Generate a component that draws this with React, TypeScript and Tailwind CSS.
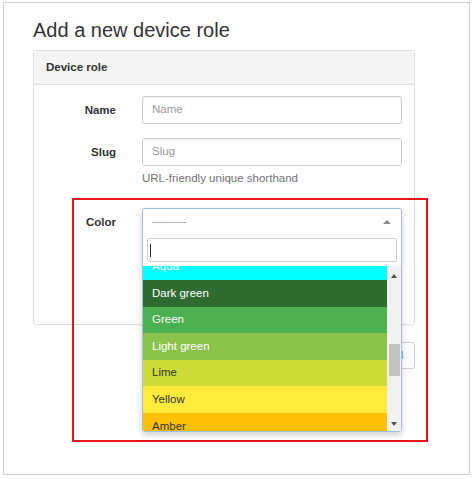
import React from "react";

const options = [
	{ name: "Aqua", bg: "bg-[#00ffff]", text: "text-white" },
	{ name: "Dark green", bg: "bg-[#2f6b31]", text: "text-white" },
	{ name: "Green", bg: "bg-[#4caf50]", text: "text-white" },
	{ name: "Light green", bg: "bg-[#8bc34a]", text: "text-white" },
	{ name: "Lime", bg: "bg-[#cddc39]", text: "text-[#333]" },
	{ name: "Yellow", bg: "bg-[#ffeb3b]", text: "text-[#333]" },
	{ name: "Amber", bg: "bg-[#ffc107]", text: "text-[#333]" },
];

const FormRow = ({ label, children }: { label: string; children: React.ReactNode }) => {
	return (
		<div className="flex items-start">
			<label className="w-[82px] shrink-0 pt-[6px] text-right text-[11.5px] font-bold leading-[16px] text-[#333]">
				{label}
			</label>
			<div className="ml-[26px] w-[260px]">{children}</div>
		</div>
	);
};

const TextInput = ({ placeholder }: { placeholder: string }) => {
	return (
		<div className="flex h-[28px] items-center rounded-[3px] border border-[#ccc] bg-white px-[9px] text-[11.5px] text-[#999] shadow-[inset_0_1px_1px_rgba(0,0,0,0.06)]">
			{placeholder}
		</div>
	);
};

const ColorSelect = () => {
	return (
		<div className="relative h-[28px]">
			{/* open select2 dropdown, lies over the rest of the form */}
			<div className="absolute left-0 top-0 z-10 w-[260px] rounded-[3px] border border-[#9dc1e4] bg-white shadow-[0_3px_6px_rgba(0,0,0,0.18)]">
				<div className="flex h-[25px] items-center justify-between pl-[9px] pr-[10px]">
					<span className="text-[11.5px] text-[#999]">---------</span>
					<span className="h-0 w-0 border-x-[4px] border-b-[4px] border-x-transparent border-b-[#888]" />
				</div>
				<div className="p-[4px]">
					<div className="flex h-[24px] items-center rounded-[2px] border border-[#ccc] px-[2px]">
						<span className="h-[13px] w-px bg-[#222]" />
					</div>
				</div>
				<div className="flex h-[165px] overflow-hidden">
					<div className="flex-1 overflow-hidden">
						<div className="-mt-[12.6px]">
							{options.map((o) => (
								<div
									key={o.name}
									className={`flex h-[26.6px] items-center pl-[9px] text-[11.5px] ${o.bg} ${o.text}`}
								>
									{o.name}
								</div>
							))}
						</div>
					</div>
					<div className="flex w-[14px] flex-col items-center bg-[#f1f1f1]">
						<span className="mt-[8px] h-0 w-0 border-x-[3px] border-b-[4px] border-x-transparent border-b-[#505050]" />
						<div className="mt-[66px] h-[32px] w-[11px] bg-[#c1c1c1]" />
						<div className="flex-1" />
						<span className="mb-[5px] h-0 w-0 border-x-[3px] border-t-[4px] border-x-transparent border-t-[#505050]" />
					</div>
				</div>
			</div>
		</div>
	);
};

export default function App() {
	return (
		<div className="h-[479px] w-[474px] bg-white pl-[3px] pt-[2px] font-['Liberation_Sans',Arial,sans-serif]">
			<div className="relative h-[473px] w-[467px] border border-[#cdcdcd] pl-[29px] pt-[16px]">
				<h1 className="text-[20px] font-normal leading-[22px] text-[#333]">Add a new device role</h1>

				<div className="mt-[9px] w-[382px] rounded-[3px] border border-[#ddd] bg-white">
					<div className="flex h-[34px] items-center rounded-t-[3px] border-b border-[#ddd] bg-[#f5f5f5] px-[12px] text-[11.5px] font-bold text-[#333]">
						Device role
					</div>
					<div className="pb-[88px] pt-[11px]">
						<FormRow label="Name">
							<TextInput placeholder="Name" />
						</FormRow>
						<div className="mt-[14px]">
							<FormRow label="Slug">
								<TextInput placeholder="Slug" />
								<p className="mt-[4px] text-[11.5px] leading-[16px] text-[#737373]">
									URL-friendly unique shorthand
								</p>
							</FormRow>
						</div>
						<div className="mt-[22px]">
							<FormRow label="Color">
								<ColorSelect />
							</FormRow>
						</div>
					</div>
				</div>

				<div className="mt-[17px] flex w-[382px] justify-end">
					<button className="h-[27px] rounded-[3px] border border-[#ccc] bg-white pl-[12px] pr-[11px] text-[11.5px] text-[#333]">
						Cancel
					</button>
				</div>

				{/* annotation frame */}
				<div className="pointer-events-none absolute left-[68px] top-[195px] h-[244px] w-[356px] border-2 border-[#e8141c]" />
			</div>
		</div>
	);
}
